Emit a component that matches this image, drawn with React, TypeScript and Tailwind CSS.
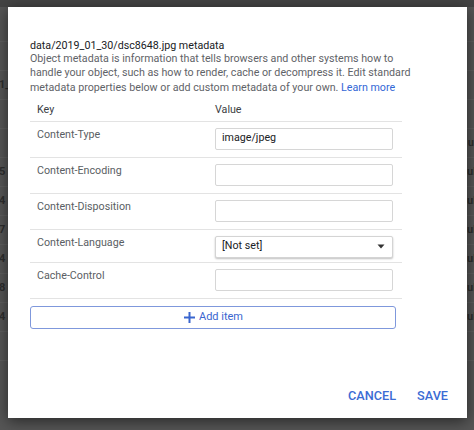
import React from 'react';

const rows = [
  { key: 'Content-Type', value: 'image/jpeg' },
  { key: 'Content-Encoding', value: '' },
  { key: 'Content-Disposition', value: '' },
  { key: 'Content-Language', value: '[Not set]', select: true },
  { key: 'Cache-Control', value: '' },
];

// faint page content behind the overlay
const bgRows = ['', '', '1_', '', '', '5', '4', '7', '4', '8', '4', ''];
const bgRight = ['', '', '', '', 'u', 'ul', 'ul', 'ul', 'ul', 'ul', 'ul', ''];

function BackgroundPage() {
  return (
    <div className="absolute inset-0 flex flex-col bg-[#565656]">
      <div className="h-[7px] bg-[#444444]" />
      <div className="h-[6px]" />
      {bgRows.map((t, i) => (
        <div
          key={i}
          className="flex h-[29px] items-center justify-between border-b border-[#5e5e5e] text-[11px] font-bold text-[#2e2e2e]"
        >
          <span className="-ml-[1px] w-[10px]">{t}</span>
          <span className="w-[7px] overflow-hidden text-right">{bgRight[i]}</span>
        </div>
      ))}
    </div>
  );
}

function Row({ label, value, select }: { label: string; value: string; select?: boolean }) {
  return (
    <div className={`flex items-start border-b border-[#e3e3e3] pt-[6px] ${select ? 'pb-[4px]' : 'pb-[7px]'}`}>
      <div className="w-[185px] pl-[7px] leading-[14.5px] text-[#5a5e63]">{label}</div>
      {select ? (
        <div className="flex h-[22px] w-[178px] items-center justify-between rounded-[2px] border border-[#d4d4d4] bg-white pl-[6px] pr-[7px] text-[#202124] shadow-[0_1px_2px_rgba(0,0,0,0.25)]">
          <span>{value}</span>
          <svg width="8" height="5" viewBox="0 0 8 5">
            <path d="M0.5 0.5 L7.5 0.5 L4 4.5 Z" fill="#333" />
          </svg>
        </div>
      ) : (
        <div className="flex h-[22px] w-[178px] items-center rounded-[2px] border border-[#d6d6d6] bg-white pl-[6px] text-[#202124]">
          {value}
        </div>
      )}
    </div>
  );
}

export default function App() {
  return (
    <div className="relative h-[430px] w-[474px] overflow-hidden font-['Roboto',sans-serif]">
      <BackgroundPage />

      {/* Dialog */}
      <div className="absolute left-[8px] top-[7px] flex h-[411px] w-[459px] flex-col bg-white pl-[22px] pt-[33px] text-[10.7px] shadow-[0_3px_14px_rgba(0,0,0,0.55)]">
        <div className="leading-[11.5px] text-[#202124]">data/2019_01_30/dsc8648.jpg metadata</div>
        <div className="whitespace-nowrap leading-[14.5px] text-[#5f6368]">
          <div>Object metadata is information that tells browsers and other systems how to</div>
          <div>handle your object, such as how to render, cache or decompress it. Edit standard</div>
          <div>
            metadata properties below or add custom metadata of your own.{' '}
            <span className="text-[#3367d6]">Learn more</span>
          </div>
        </div>

        <div className="w-[372px]">
          <div className="flex border-b border-[#e3e3e3] pb-[3.5px] pt-[7.5px] leading-[14.5px] text-[#3c4043]">
            <div className="w-[185px] pl-[7px]">Key</div>
            <div>Value</div>
          </div>
          {rows.map((r) => (
            <Row key={r.key} label={r.key} value={r.value} select={r.select} />
          ))}
        </div>

        <button className="mt-[7px] flex h-[23px] w-[366px] items-center justify-center gap-[3px] rounded-[3px] border border-[#7f98dc] text-[11px] text-[#3a66cf]">
          <svg width="13" height="13" viewBox="0 0 13 13">
            <path d="M6.5 1 V12 M1 6.5 H12" stroke="#3a66cf" strokeWidth="2" />
          </svg>
          <span>Add item</span>
        </button>

        <div className="mt-auto flex justify-end gap-[21px] pb-[14px] pr-[19px] text-[12.7px] font-medium leading-[16px] text-[#3b6cd4]">
          <span>CANCEL</span>
          <span>SAVE</span>
        </div>
      </div>
    </div>
  );
}
